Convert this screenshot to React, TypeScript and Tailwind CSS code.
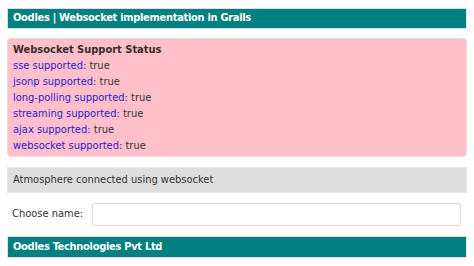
export default function App() {
  const rows = ['sse', 'jsonp', 'long-polling', 'streaming', 'ajax', 'websocket'];
  return (
    <div className="bg-white w-[474px] h-[266px] px-[7px] pt-[8px] font-['DejaVu_Sans_Condensed','DejaVu_Sans',sans-serif] text-[11px] text-[#333]">
      <div className="h-[21px] bg-[#008080] border border-[#e0e0e0] flex items-center px-[5px] text-white font-bold text-[11px] tracking-[-0.3px]">
        Oodles | Websocket implementation in Grails
      </div>
      <div className="mt-[9px] h-[119px] bg-[#ffc0cb] border border-[#e6dcdc] rounded-[4px] px-[5px] pt-[3px]">
        <div className="font-bold text-[11px] text-[#3a2a2a] leading-[16px]">Websocket Support Status</div>
        {rows.map((r) => (
          <div key={r} className="leading-[16px]">
            <span className="text-[#2a1ad0]">{r} supported:</span> <span>true</span>
          </div>
        ))}
      </div>
      <div className="mt-[10px] h-[26px] bg-[#dddddd] border border-[#e6e6e6] flex items-center px-[5px]">
        Atmosphere connected using websocket
      </div>
      <div className="mt-[10px] h-[23px] flex items-center">
        <span className="pl-[5px] w-[85px]">Choose name:</span>
        <input className="h-[23px] w-[369px] border border-[#dcdcdc] rounded-[3px] bg-white outline-none" />
      </div>
      <div className="mt-[10px] h-[22px] bg-[#008080] border border-[#e0e0e0] flex items-center px-[5px] text-white font-bold text-[11px] tracking-[-0.3px]">
        Oodles Technologies Pvt Ltd
      </div>
    </div>
  );
}
